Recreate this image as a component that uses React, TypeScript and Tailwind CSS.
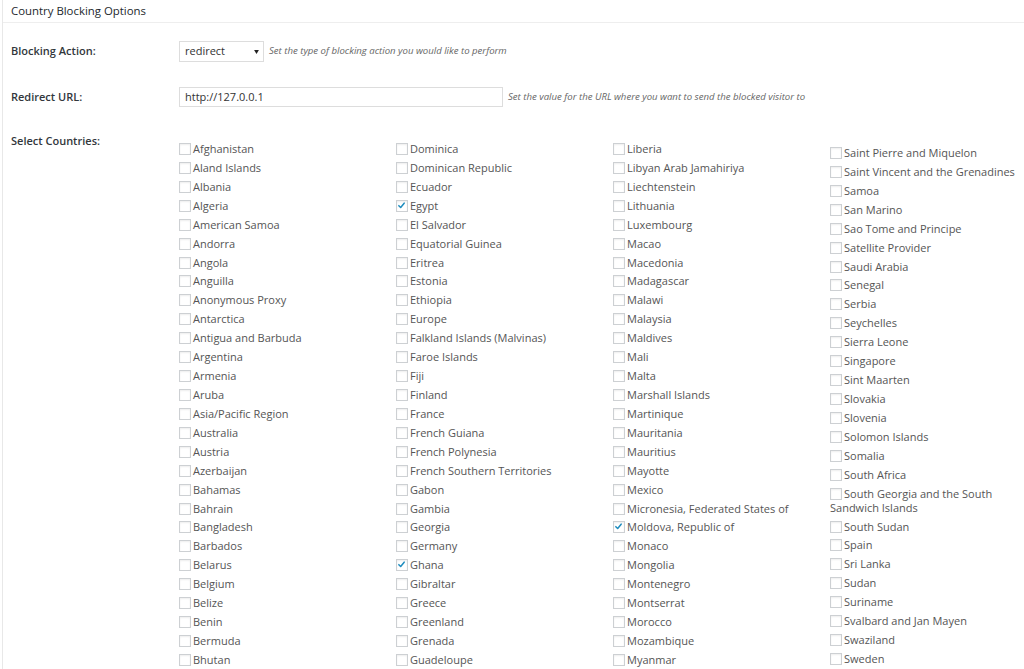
import React from "react";

const col1 = ["Afghanistan","Aland Islands","Albania","Algeria","American Samoa","Andorra","Angola","Anguilla","Anonymous Proxy","Antarctica","Antigua and Barbuda","Argentina","Armenia","Aruba","Asia/Pacific Region","Australia","Austria","Azerbaijan","Bahamas","Bahrain","Bangladesh","Barbados","Belarus","Belgium","Belize","Benin","Bermuda","Bhutan"];
const col2 = ["Dominica","Dominican Republic","Ecuador","Egypt","El Salvador","Equatorial Guinea","Eritrea","Estonia","Ethiopia","Europe","Falkland Islands (Malvinas)","Faroe Islands","Fiji","Finland","France","French Guiana","French Polynesia","French Southern Territories","Gabon","Gambia","Georgia","Germany","Ghana","Gibraltar","Greece","Greenland","Grenada","Guadeloupe"];
const col3 = ["Liberia","Libyan Arab Jamahiriya","Liechtenstein","Lithuania","Luxembourg","Macao","Macedonia","Madagascar","Malawi","Malaysia","Maldives","Mali","Malta","Marshall Islands","Martinique","Mauritania","Mauritius","Mayotte","Mexico","Micronesia, Federated States of","Moldova, Republic of","Monaco","Mongolia","Montenegro","Montserrat","Morocco","Mozambique","Myanmar"];
const col4 = ["Saint Pierre and Miquelon","Saint Vincent and the Grenadines","Samoa","San Marino","Sao Tome and Principe","Satellite Provider","Saudi Arabia","Senegal","Serbia","Seychelles","Sierra Leone","Singapore","Sint Maarten","Slovakia","Slovenia","Solomon Islands","Somalia","South Africa","South Georgia and the South Sandwich Islands","South Sudan","Spain","Sri Lanka","Sudan","Suriname","Svalbard and Jan Mayen","Swaziland","Sweden"];

const checked = new Set(["Egypt", "Ghana", "Moldova, Republic of"]);

function Box({ on }: { on: boolean }) {
  return (
    <span className="inline-block align-top mt-[1px] mr-[2px] w-[12px] h-[12px] border border-[#cdd0d3] bg-white shadow-[inset_0_1px_2px_rgba(0,0,0,0.07)] relative">
      {on && (
        <svg viewBox="0 0 12 12" className="absolute left-0 top-0 w-[10px] h-[10px]">
          <path d="M2.2 5.6 L4.4 7.8 L8.6 2.6" fill="none" stroke="#1e8cbe" strokeWidth="1.8" strokeLinecap="round" strokeLinejoin="round" />
        </svg>
      )}
    </span>
  );
}

function Col({ items, w, pt }: { items: string[]; w: string; pt: string }) {
  return (
    <div className={`${w} ${pt} shrink-0`}>
      {items.map((c) => (
        <div key={c} className="text-[11px] leading-[14px] mb-[4.93px] text-[#555]">
          <Box on={checked.has(c)} />
          {c}
        </div>
      ))}
    </div>
  );
}

export default function App() {
  return (
    <div className="w-[1024px] h-[669px] overflow-hidden bg-white font-['Open_Sans',sans-serif]">
      <div className="ml-[2px] border-l border-[#e8e8e8] h-full">
        <div className="h-[23px] border-b border-[#eeeeee] flex items-center pl-[8px] text-[11.4px] text-[#23282d]">
          Country Blocking Options
        </div>
        <div className="mt-[18px] flex items-center h-[21px]">
          <div className="w-[176px] pl-[8px] text-[11px] font-semibold text-[#32373c]">Blocking Action:</div>
          <div className="w-[85px] h-[21px] border border-[#dddddd] flex items-center justify-between pl-[5px] pr-[4px] text-[11px] text-[#333]">
            <span>redirect</span>
            <svg viewBox="0 0 6 5" className="w-[5px] h-[4px]"><path d="M0 0 L6 0 L3 5 Z" fill="#222" /></svg>
          </div>
          <div className="ml-[5px] text-[9.6px] italic text-[#666]">Set the type of blocking action you would like to perform</div>
        </div>
        <div className="mt-[25px] flex items-center h-[20px]">
          <div className="w-[176px] pl-[8px] text-[11px] font-semibold text-[#32373c]">Redirect URL:</div>
          <div className="w-[324px] h-[20px] border border-[#dddddd] flex items-center pl-[5px] text-[11px] text-[#333]">http://127.0.0.1</div>
          <div className="ml-[5px] text-[9.6px] italic text-[#666]">Set the value for the URL where you want to send the blocked visitor to</div>
        </div>
        <div className="mt-[27px] flex items-start">
          <div className="w-[176px] pl-[8px] text-[11px] leading-[14px] font-semibold text-[#32373c]">Select Countries:</div>
          <Col items={col1} w="w-[217px]" pt="pt-[8px]" />
          <Col items={col2} w="w-[217px]" pt="pt-[8px]" />
          <Col items={col3} w="w-[217px]" pt="pt-[8px]" />
          <Col items={col4} w="w-[190px]" pt="pt-[12px]" />
        </div>
      </div>
    </div>
  );
}
